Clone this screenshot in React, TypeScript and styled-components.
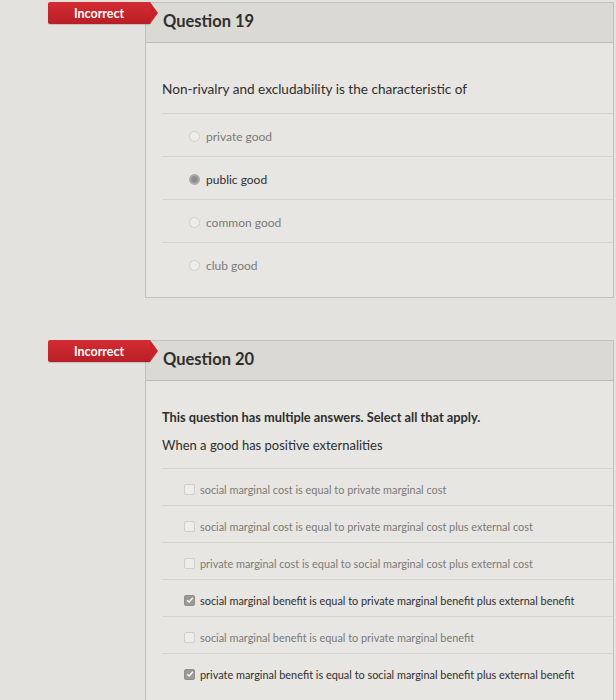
import React from 'react';
import styled, { createGlobalStyle } from 'styled-components';

type Option = { text: string; selected?: boolean };

const q19Options: Option[] = [
  { text: 'private good' },
  { text: 'public good', selected: true },
  { text: 'common good' },
  { text: 'club good' },
];

const q20Options: Option[] = [
  { text: 'social marginal cost is equal to private marginal cost' },
  { text: 'social marginal cost is equal to private marginal cost plus external cost' },
  { text: 'private marginal cost is equal to social marginal cost plus external cost' },
  { text: 'social marginal benefit is equal to private marginal benefit plus external benefit', selected: true },
  { text: 'social marginal benefit is equal to private marginal benefit' },
  { text: 'private marginal benefit is equal to social marginal benefit plus external benefit', selected: true },
];

const App = () => (
  <>
    <GlobalStyle />
    <Page>
      <QuestionBlock $top={2}>
        <Gutter>
          <Badge>Incorrect</Badge>
        </Gutter>
        <Card>
          <CardHeader>
            <QuestionName>Question 19</QuestionName>
          </CardHeader>
          <CardBody $pad={36}>
            <QuestionText>Non-rivalry and excludability is the characteristic of</QuestionText>
            <AnswerList $gap={14}>
              {q19Options.map((o) => (
                <RadioRow key={o.text}>
                  <Radio $checked={o.selected} />
                  <RadioLabel $checked={o.selected}>{o.text}</RadioLabel>
                </RadioRow>
              ))}
            </AnswerList>
          </CardBody>
        </Card>
      </QuestionBlock>

      <QuestionBlock $top={42}>
        <Gutter>
          <Badge>Incorrect</Badge>
        </Gutter>
        <Card>
          <CardHeader>
            <QuestionName>Question 20</QuestionName>
          </CardHeader>
          <CardBody $pad={26}>
            <MultiNote>This question has multiple answers. Select all that apply.</MultiNote>
            <QuestionText $small>When a good has positive externalities</QuestionText>
            <AnswerList $gap={13}>
              {q20Options.map((o) => (
                <CheckRow key={o.text}>
                  <Checkbox $checked={o.selected}>
                    {o.selected && (
                      <svg width="8" height="8" viewBox="0 0 8 8" fill="none">
                        <path d="M1.2 4.2 L3.2 6 L6.8 1.8" stroke="#fff" strokeWidth="1.4" />
                      </svg>
                    )}
                  </Checkbox>
                  <CheckLabel $checked={o.selected}>{o.text}</CheckLabel>
                </CheckRow>
              ))}
            </AnswerList>
          </CardBody>
        </Card>
      </QuestionBlock>
    </Page>
  </>
);

export default App;

// ── Styled Components ──

const GlobalStyle = createGlobalStyle`
  html, body {
    margin: 0;
    padding: 0;
    background: #e3e2de;
    font-family: Lato, "Open Sans", sans-serif;
  }
`;

const Page = styled.div`
  width: 616px;
  height: 700px;
  overflow: hidden;
  background: #e3e2de;
`;

const QuestionBlock = styled.div<{ $top: number }>`
  display: flex;
  align-items: flex-start;
  margin-top: ${({ $top }) => $top}px;
  padding-right: 2px;
`;

const Gutter = styled.div`
  width: 145px;
  flex-shrink: 0;
  display: flex;
  justify-content: flex-end;
  position: relative;
  z-index: 2;
`;

const Badge = styled.div`
  position: relative;
  margin-right: -5px;
  width: 102px;
  height: 22px;
  box-sizing: border-box;
  display: flex;
  align-items: center;
  justify-content: center;
  background: linear-gradient(#d42c33, #b91e25);
  color: #fff;
  font-size: 12.5px;
  font-weight: 700;
  border-radius: 2px 0 0 2px;
  box-shadow: 0 1px 1px rgba(0, 0, 0, 0.15);

  &::after {
    content: '';
    position: absolute;
    right: -8px;
    top: 0;
    border-top: 11px solid transparent;
    border-bottom: 11px solid transparent;
    border-left: 8px solid #c6242b;
  }
`;

const Card = styled.div`
  flex: 1;
  min-width: 0;
  border: 1px solid #c2c0bb;
  background: #e7e6e2;
`;

const CardHeader = styled.div`
  height: 40px;
  padding: 7px 17px 0;
  box-sizing: border-box;
  background: #dad9d4;
  border-bottom: 1px solid #bebcb7;
`;

const QuestionName = styled.h2`
  margin: 0;
  font-size: 16.5px;
  line-height: 22px;
  font-weight: 700;
  color: #2f2f2f;
`;

const CardBody = styled.div<{ $pad: number }>`
  padding: ${({ $pad }) => $pad}px 0 12px 16px;
`;

const MultiNote = styled.p`
  margin: 0 0 8px;
  font-size: 12.8px;
  line-height: 20px;
  font-weight: 700;
  color: #2f2f2f;
`;

const QuestionText = styled.p<{ $small?: boolean }>`
  margin: 0;
  font-size: ${({ $small }) => ($small ? 13 : 13.6)}px;
  line-height: 20px;
  color: #2f2f2f;
`;

const AnswerList = styled.div<{ $gap: number }>`
  margin-top: ${({ $gap }) => $gap}px;
`;

const RadioRow = styled.div`
  height: 43px;
  display: flex;
  align-items: center;
  padding: 2px 0 0 27px;
  box-sizing: border-box;
  border-top: 1px solid #d5d4cf;
`;

const Radio = styled.span<{ $checked?: boolean }>`
  width: 9px;
  height: 9px;
  border-radius: 50%;
  flex-shrink: 0;
  margin-right: 6px;
  border: 1px solid ${({ $checked }) => ($checked ? '#a9a8a4' : '#d0cfca')};
  background: ${({ $checked }) =>
    $checked ? 'radial-gradient(circle, #8e8d89 40%, #b5b4b0 75%)' : '#eeede9'};
`;

const RadioLabel = styled.span<{ $checked?: boolean }>`
  font-size: 12px;
  color: ${({ $checked }) => ($checked ? '#2f2f2f' : '#7b7a77')};
`;

const CheckRow = styled.div`
  height: 37px;
  display: flex;
  align-items: center;
  padding: 4px 0 0 22px;
  box-sizing: border-box;
  border-top: 1px solid #d5d4cf;
`;

const Checkbox = styled.span<{ $checked?: boolean }>`
  width: 9px;
  height: 9px;
  border-radius: 2px;
  flex-shrink: 0;
  margin-right: 5px;
  display: inline-flex;
  align-items: center;
  justify-content: center;
  border: 1px solid ${({ $checked }) => ($checked ? '#8f8e8a' : '#d0cfca')};
  background: ${({ $checked }) => ($checked ? '#9b9a96' : '#eeede9')};
`;

const CheckLabel = styled.span<{ $checked?: boolean }>`
  font-size: 10.9px;
  white-space: nowrap;
  color: ${({ $checked }) => ($checked ? '#2f2f2f' : '#7b7a77')};
`;
